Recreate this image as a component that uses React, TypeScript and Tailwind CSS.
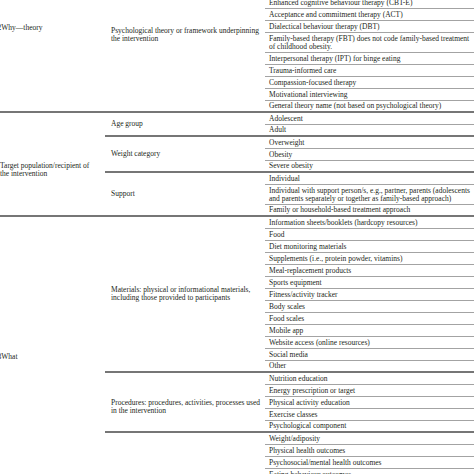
import React from "react";

type Row = { t: string; d?: boolean };
type Sub = { label: string; rows: Row[]; labelCls?: string };
type Section = { label: React.ReactNode; subs: Sub[]; leftCls: string };

const sections: Section[] = [
  {
    label: (
      <span>
        <span className="ml-[-2.5px]">2</span>Why—theory
      </span>
    ),
    leftCls: "",
    subs: [
      { label: "", rows: [{ t: "", d: true }] },
      {
        label: "Psychological theory or framework underpinning the intervention",
        labelCls: "pb-[6px]",
        rows: [
          { t: "Cognitive behaviour therapy (CBT)" },
          { t: "Behaviour therapy (BT) including behavioural weight management and lifestyle programmes", d: true },
          { t: "Enhanced cognitive behaviour therapy (CBT-E)" },
          { t: "Acceptance and commitment therapy (ACT)" },
          { t: "Dialectical behaviour therapy (DBT)" },
          { t: "Family-based therapy (FBT) does not code family-based treatment of childhood obesity.", d: true },
          { t: "Interpersonal therapy (IPT) for binge eating" },
          { t: "Trauma-informed care" },
          { t: "Compassion-focused therapy" },
          { t: "Motivational interviewing" },
          { t: "General theory name (not based on psychological theory)" },
        ],
      },
    ],
  },
  {
    label: "Target population/recipient of the intervention",
    leftCls: "pt-[12px]",
    subs: [
      { label: "Age group", rows: [{ t: "Adolescent" }, { t: "Adult" }] },
      { label: "Weight category", rows: [{ t: "Overweight" }, { t: "Obesity" }, { t: "Severe obesity" }] },
      {
        label: "Support",
        rows: [
          { t: "Individual" },
          { t: "Individual with support person/s, e.g., partner, parents (adolescents and parents separately or together as family-based approach)", d: true },
          { t: "Family or household-based treatment approach" },
        ],
      },
    ],
  },
  {
    label: (
      <span>
        <span className="ml-[-2.5px]">3</span>What
      </span>
    ),
    leftCls: "pb-[30px]",
    subs: [
      {
        label: "Materials: physical or informational materials, including those provided to participants",
        rows: [
          { t: "Information sheets/booklets (hardcopy resources)" },
          { t: "Food" },
          { t: "Diet monitoring materials" },
          { t: "Supplements (i.e., protein powder, vitamins)" },
          { t: "Meal-replacement products" },
          { t: "Sports equipment" },
          { t: "Fitness/activity tracker" },
          { t: "Body scales" },
          { t: "Food scales" },
          { t: "Mobile app" },
          { t: "Website access (online resources)" },
          { t: "Social media" },
          { t: "Other" },
        ],
      },
      {
        label: "Procedures: procedures, activities, processes used in the intervention",
        labelCls: "pt-[10px]",
        rows: [
          { t: "Nutrition education" },
          { t: "Energy prescription or target" },
          { t: "Physical activity education" },
          { t: "Exercise classes" },
          { t: "Psychological component" },
        ],
      },
      {
        label: "",
        rows: [
          { t: "Weight/adiposity" },
          { t: "Physical health outcomes" },
          { t: "Psychosocial/mental health outcomes" },
          { t: "Eating behaviour outcomes" },
          { t: "Physical activity outcomes" },
          { t: "Dietary intake outcomes" },
          { t: "Quality of life" },
          { t: "Other" },
        ],
      },
    ],
  },
];

export default function App() {
  return (
    <div className="w-[474px] h-[474px] overflow-hidden bg-white text-[#231f20] font-['Liberation_Serif',serif] text-[7.5px]">
      <div className="w-[478px] mt-[-55px]">
        {sections.map((s, i) => (
          <div key={i} className="flex border-b-2 border-[#767676]">
            <div className={`w-[105px] shrink-0 flex items-center pr-[8px] leading-[8px] ${s.leftCls}`}>
              <div>{s.label}</div>
            </div>
            <div className="flex-1 flex flex-col">
              {s.subs.map((sub, j) => (
                <div key={j} className="flex border-b-2 border-[#767676] last:border-b-0">
                  <div className={`w-[160px] shrink-0 flex items-center pl-[6px] pr-[4px] leading-[8px] ${sub.labelCls ?? ""}`}>
                    <div>{sub.label}</div>
                  </div>
                  <div className="flex-1 flex flex-col">
                    {sub.rows.map((r, k) => (
                      <div
                        key={k}
                        className={
                          r.d
                            ? "h-[20px] flex items-center pl-[4px] pr-[4px] leading-[8px] border-b border-[#a3a3a3] last:h-[18px] last:border-b-0"
                            : "h-[12px] flex items-center pl-[4px] pr-[4px] leading-[8px] whitespace-nowrap border-b border-[#a3a3a3] last:h-[10px] last:border-b-0"
                        }
                      >
                        <div>{r.t}</div>
                      </div>
                    ))}
                  </div>
                </div>
              ))}
            </div>
          </div>
        ))}
      </div>
    </div>
  );
}
